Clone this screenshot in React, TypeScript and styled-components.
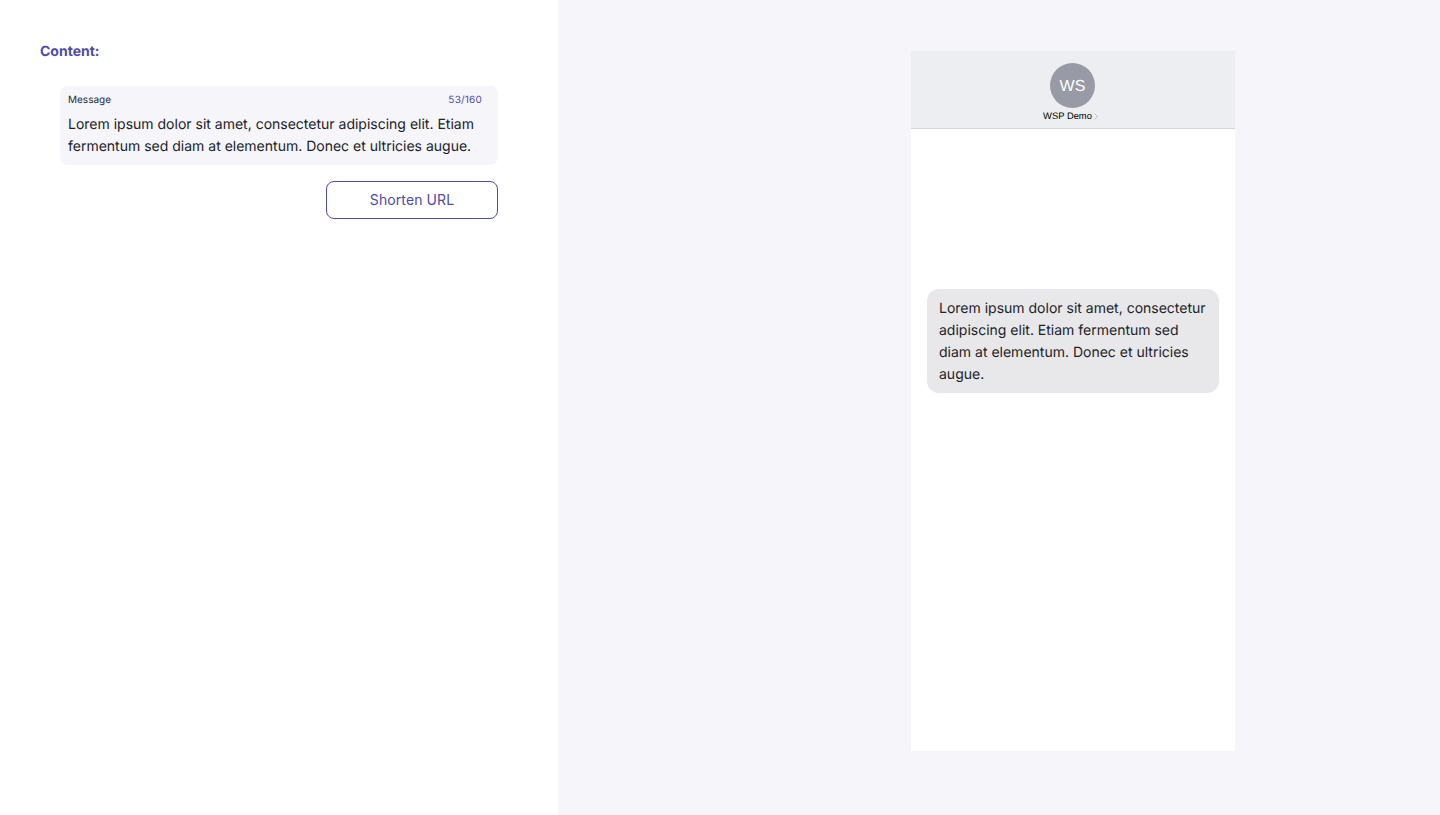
import React from "react";
import styled, { createGlobalStyle } from "styled-components";

const GlobalStyle = createGlobalStyle`
  html, body {
    margin: 0;
    padding: 0;
    background: #fff;
    font-family: Inter, "Liberation Sans", sans-serif;
    text-rendering: geometricPrecision;
  }
  * { box-sizing: border-box; }
`;

const Page = styled.div`
  display: flex;
  width: 100%;
  height: 815px;
  overflow: hidden;
`;

const Editor = styled.section`
  width: 558px;
  flex-shrink: 0;
  padding: 43px 60px 0 40px;
`;

const SectionTitle = styled.h2`
  margin: 0;
  font-size: 14px;
  line-height: 17px;
  font-weight: 700;
  color: #4f4aa8;
`;

const FieldColumn = styled.div`
  display: flex;
  flex-direction: column;
  align-items: flex-end;
  gap: 16px;
  margin-top: 26px;
  margin-left: 20px;
`;

const MessageField = styled.div`
  width: 100%;
  height: 79px;
  padding: 8px 16px 0 8px;
  background: #f5f5fa;
  border-radius: 8px;
`;

const FieldHeader = styled.div`
  display: flex;
  justify-content: space-between;
  align-items: center;
  font-size: 10px;
  line-height: 12px;
`;

const FieldLabel = styled.span`
  color: #2b2b33;
`;

const Counter = styled.span`
  color: #4f4aa8;
  letter-spacing: 0.2px;
`;

const FieldText = styled.p`
  margin: 8px -16px 0 0;
  font-size: 14px;
  line-height: 22px;
  color: #222228;
`;

const OutlineButton = styled.button`
  width: 172px;
  height: 38px;
  padding-bottom: 2px;
  background: #fff;
  border: 1px solid #4f4aa8;
  border-radius: 8px;
  font-family: inherit;
  font-size: 14px;
  letter-spacing: 0.1px;
  color: #4f4aa8;
`;

const PreviewPane = styled.section`
  flex: 1;
  display: flex;
  padding-top: 51px;
  padding-left: 353px;
  background: #f5f5fa;
`;

const Phone = styled.div`
  width: 324px;
  height: 700px;
  background: #fff;
`;

const PhoneHeader = styled.header`
  height: 78px;
  padding-top: 12px;
  display: flex;
  flex-direction: column;
  align-items: center;
  background: #edeef1;
  border-bottom: 1px solid #d6d6d8;
`;

const Avatar = styled.div`
  width: 45px;
  height: 45px;
  margin-right: 1px;
  padding-top: 2px;
  display: flex;
  align-items: center;
  justify-content: center;
  border-radius: 50%;
  background: #989ba5;
  color: #fff;
  font-family: "Liberation Sans", Arial, sans-serif;
  font-size: 16px;
`;

const ContactRow = styled.div`
  display: flex;
  align-items: center;
  gap: 2px;
  height: 12px;
  margin-top: 2px;
  margin-left: -5px;
  font-family: "Liberation Sans", Arial, sans-serif;
  font-size: 9.4px;
  line-height: 12px;
  color: #000;
`;

const MessageList = styled.div`
  padding: 160px 16px 0;
`;

const Bubble = styled.div`
  padding: 9px 12px 7px;
  background: #e8e8ea;
  border-radius: 12px;
  font-size: 14px;
  line-height: 22px;
  color: #222228;
`;

const lorem =
  "Lorem ipsum dolor sit amet, consectetur adipiscing elit. Etiam fermentum sed diam at elementum. Donec et ultricies augue.";

const App = () => {
  return (
    <Page>
      <GlobalStyle />
      <Editor>
        <SectionTitle>Content:</SectionTitle>
        <FieldColumn>
          <MessageField>
            <FieldHeader>
              <FieldLabel>Message</FieldLabel>
              <Counter>53/160</Counter>
            </FieldHeader>
            <FieldText>{lorem}</FieldText>
          </MessageField>
          <OutlineButton>Shorten URL</OutlineButton>
        </FieldColumn>
      </Editor>
      <PreviewPane>
        <Phone>
          <PhoneHeader>
            <Avatar>WS</Avatar>
            <ContactRow>
              WSP Demo
              <svg width="4" height="7" viewBox="0 0 4 7" fill="none">
                <path d="M0.5 0.5 L3.5 3.5 L0.5 6.5" stroke="#b8b8bc" strokeWidth="0.9" />
              </svg>
            </ContactRow>
          </PhoneHeader>
          <MessageList>
            <Bubble>{lorem}</Bubble>
          </MessageList>
        </Phone>
      </PreviewPane>
    </Page>
  );
};

export default App;
